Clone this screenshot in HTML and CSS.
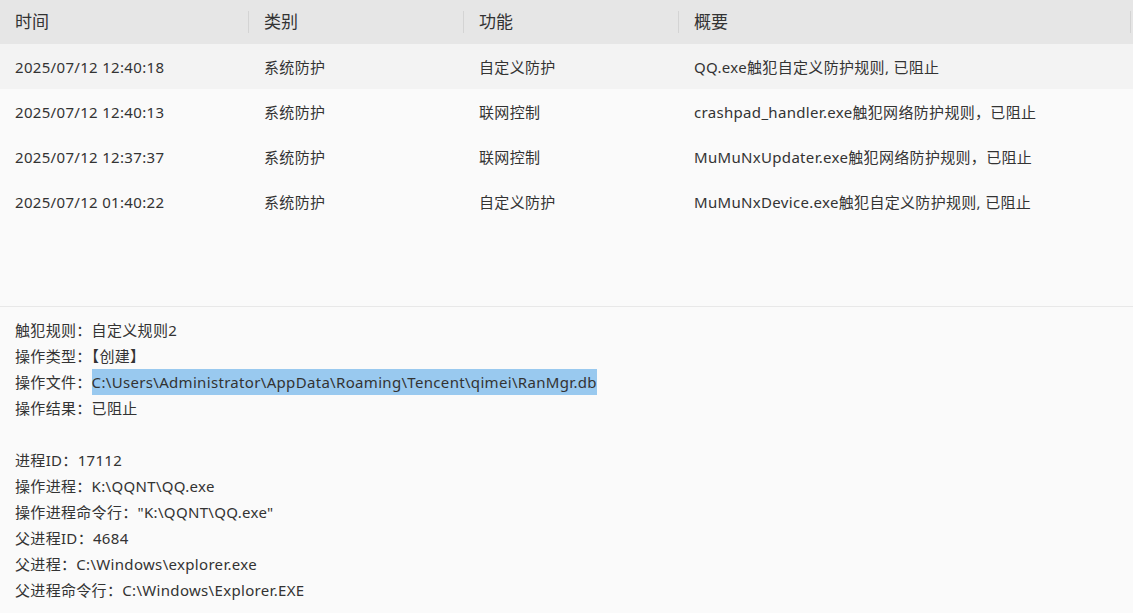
FILE: index.html
```html
<!DOCTYPE html>
<html lang="zh-CN">
  <head>
    <meta charset="UTF-8" />
    <meta name="viewport" content="width=device-width, initial-scale=1.0" />
    <title>防护日志</title>
    <link rel="stylesheet" href="styles.css">
  </head>
  <body>
    <div class="log-list">
      <div class="log-head">
        <div class="cell">时间</div>
        <div class="cell">类别</div>
        <div class="cell">功能</div>
        <div class="cell last">概要</div>
      </div>
      <div class="log-row selected">
        <div class="cell">2025/07/12 12:40:18</div>
        <div class="cell">系统防护</div>
        <div class="cell">自定义防护</div>
        <div class="cell">QQ.exe触犯自定义防护规则, 已阻止</div>
      </div>
      <div class="log-row">
        <div class="cell">2025/07/12 12:40:13</div>
        <div class="cell">系统防护</div>
        <div class="cell">联网控制</div>
        <div class="cell">crashpad_handler.exe触犯网络防护规则，已阻止</div>
      </div>
      <div class="log-row">
        <div class="cell">2025/07/12 12:37:37</div>
        <div class="cell">系统防护</div>
        <div class="cell">联网控制</div>
        <div class="cell">MuMuNxUpdater.exe触犯网络防护规则，已阻止</div>
      </div>
      <div class="log-row">
        <div class="cell">2025/07/12 01:40:22</div>
        <div class="cell">系统防护</div>
        <div class="cell">自定义防护</div>
        <div class="cell">MuMuNxDevice.exe触犯自定义防护规则, 已阻止</div>
      </div>
    </div>
    <div class="detail">
      <div class="line">触犯规则：自定义规则2</div>
      <div class="line">操作类型：【创建】</div>
      <div class="line">操作文件：<span class="mark">C:\Users\Administrator\AppData\Roaming\Tencent\qimei\RanMgr.db</span></div>
      <div class="line">操作结果：已阻止</div>
      <div class="line blank"></div>
      <div class="line">进程ID：17112</div>
      <div class="line">操作进程：K:\QQNT\QQ.exe</div>
      <div class="line">操作进程命令行："K:\QQNT\QQ.exe"</div>
      <div class="line">父进程ID：4684</div>
      <div class="line">父进程：C:\Windows\explorer.exe</div>
      <div class="line">父进程命令行：C:\Windows\Explorer.EXE</div>
    </div>
  </body>
</html>
```

FILE: styles.css
```css
body {
    margin: 0;
    background-color: #fafafa;
    color: #333;
    font-family: "Noto Sans", "Noto Sans CJK SC", sans-serif;
    font-size: 15px;
    letter-spacing: 0.32px;
}
.log-list {
    height: 306px;
    border-bottom: 1px solid #e8e8e8;
}
.log-head,
.log-row {
    display: grid;
    grid-template-columns: 248px 215px 215px 453px;
}
.log-head {
    background-color: #e6e6e6;
    padding: 11px 0;
    font-size: 17px;
    letter-spacing: 0;
}
.log-head .cell {
    height: 22px;
    line-height: 22px;
    border-left: 1px solid #d4d4d4;
    padding-left: 15px;
}
.log-head .cell:first-child {
    border-left: none;
    padding-left: 15px;
}
.log-head .last {
    border-right: 1px solid #d4d4d4;
}
.log-row {
    height: 45px;
    align-items: center;
}
.log-row .cell {
    padding-left: 16px;
    white-space: nowrap;
}
.log-row .cell:first-child {
    padding-left: 15px;
}
.selected {
    background-color: #f3f3f3;
}
.detail {
    padding: 10px 15px;
}
.line {
    height: 26px;
    line-height: 26px;
}
.mark {
    background-color: #99c9ef;
    display: inline-block;
}
```
